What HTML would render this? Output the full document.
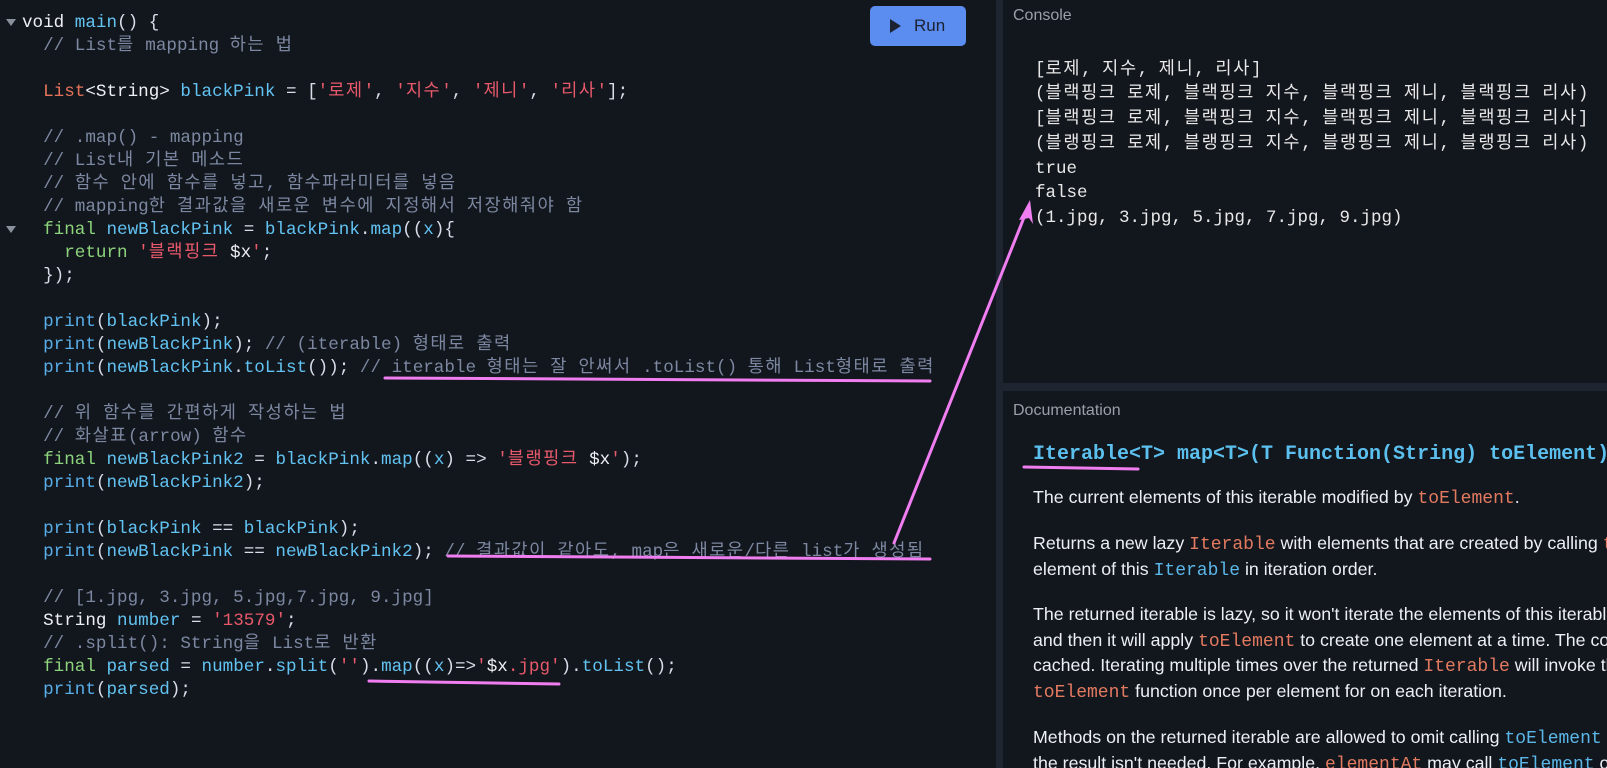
<!DOCTYPE html>
<html><head><meta charset="utf-8">
<style>
html,body{margin:0;padding:0;background:#12161d;width:1607px;height:768px;overflow:hidden}
body{position:relative;font-family:"Liberation Sans","Noto Sans CJK KR",sans-serif}
#ed{position:absolute;left:0;top:0;width:996px;height:768px;background:#12161d;overflow:hidden}
pre{margin:0;position:absolute;left:22px;top:11.5px;font-size:17.6px;line-height:23px;color:#d8dee9;font-family:"Liberation Mono","WenQuanYi Zen Hei",monospace;white-space:pre}
i{font-style:normal;letter-spacing:1.5px}
#con i{letter-spacing:1.7px}
.c{color:#7c88a1}.s{color:#e8596b}.g{color:#8dd47c}.b{color:#62c3f2}.o{color:#e5735a}.w{color:#eef0f4}.p{color:#58aee8}
.fold{position:absolute;left:6px;width:0;height:0;border-left:5px solid transparent;border-right:5px solid transparent;border-top:7px solid #8a919c}
#div{position:absolute;left:996px;top:0;width:7px;height:768px;background:#1f2530}
#rp{position:absolute;left:1003px;top:0;width:604px;height:768px;overflow:hidden}
#hband{position:absolute;left:0;top:383px;width:604px;height:8px;background:#1f2530}
.lbl{position:absolute;left:10px;font-size:16px;color:#9aa0a8}
#con{position:absolute;left:32px;top:57.5px;font-size:17.5px;line-height:24.8px;color:#e8e8e8;white-space:pre;font-family:"Liberation Mono","WenQuanYi Zen Hei",monospace}
#run{position:absolute;left:870px;top:6px;width:96px;height:40px;border-radius:5px;background:#5b8cf0}
#run .t{position:absolute;left:20px;top:13px;width:0;height:0;border-top:7px solid transparent;border-bottom:7px solid transparent;border-left:11px solid #1c2230}
#run .r{position:absolute;left:44px;top:10px;font-size:17px;color:#1c2230}
#sig{position:absolute;left:30px;top:443px;font-size:20px;font-weight:bold;color:#5cc0ee;white-space:pre;font-family:"Liberation Mono",monospace}
.doc{position:absolute;left:30px;font-size:17.8px;line-height:25.5px;color:#eceff3;white-space:nowrap}
.doc code{font-family:"Liberation Mono",monospace;font-size:18px}
.r1{color:#e27a60}.b1{color:#5ab7e8}
svg{position:absolute;left:0;top:0}
</style></head><body>
<div id="ed">
<div class="fold" style="top:19px"></div>
<div class="fold" style="top:226px"></div>
<pre><span class="w">void</span> <span class="b">main</span>() {
  <span class="c">// List<i>를</i> mapping <i>하는</i> <i>법</i></span>

  <span class="o">List</span><span class="w">&lt;String&gt;</span> <span class="b">blackPink</span> = [<span class="s">'<i>로제</i>'</span>, <span class="s">'<i>지수</i>'</span>, <span class="s">'<i>제니</i>'</span>, <span class="s">'<i>리사</i>'</span>];

  <span class="c">// .map() - mapping</span>
  <span class="c">// List<i>내</i> <i>기본</i> <i>메소드</i></span>
  <span class="c">// <i>함수</i> <i>안에</i> <i>함수를</i> <i>넣고</i>, <i>함수파라미터를</i> <i>넣음</i></span>
  <span class="c">// mapping<i>한</i> <i>결과값을</i> <i>새로운</i> <i>변수에</i> <i>지정해서</i> <i>저장해줘야</i> <i>함</i></span>
  <span class="g">final</span> <span class="b">newBlackPink</span> = <span class="b">blackPink</span>.<span class="b">map</span>((<span class="b">x</span>){
    <span class="g">return</span> <span class="s">'<i>블랙핑크</i> </span><span class="w">$x</span><span class="s">'</span>;
  });

  <span class="p">print</span>(<span class="b">blackPink</span>);
  <span class="p">print</span>(<span class="b">newBlackPink</span>); <span class="c">// (iterable) <i>형태로</i> <i>출력</i></span>
  <span class="p">print</span>(<span class="b">newBlackPink</span>.<span class="b">toList</span>()); <span class="c">// iterable <i>형태는</i> <i>잘</i> <i>안써서</i> .toList() <i>통해</i> List<i>형태로</i> <i>출력</i></span>

  <span class="c">// <i>위</i> <i>함수를</i> <i>간편하게</i> <i>작성하는</i> <i>법</i></span>
  <span class="c">// <i>화살표</i>(arrow) <i>함수</i></span>
  <span class="g">final</span> <span class="b">newBlackPink2</span> = <span class="b">blackPink</span>.<span class="b">map</span>((<span class="b">x</span>) =&gt; <span class="s">'<i>블랭핑크</i> </span><span class="w">$x</span><span class="s">'</span>);
  <span class="p">print</span>(<span class="b">newBlackPink2</span>);

  <span class="p">print</span>(<span class="b">blackPink</span> == <span class="b">blackPink</span>);
  <span class="p">print</span>(<span class="b">newBlackPink</span> == <span class="b">newBlackPink2</span>); <span class="c">// <i>결과값이</i> <i>같아도</i>, map<i>은</i> <i>새로운</i>/<i>다른</i> list<i>가</i> <i>생성됨</i></span>

  <span class="c">// [1.jpg, 3.jpg, 5.jpg,7.jpg, 9.jpg]</span>
  <span class="w">String</span> <span class="b">number</span> = <span class="s">'13579'</span>;
  <span class="c">// .split(): String<i>을</i> List<i>로</i> <i>반환</i></span>
  <span class="g">final</span> <span class="b">parsed</span> = <span class="b">number</span>.<span class="b">split</span>(<span class="s">''</span>).<span class="b">map</span>((<span class="b">x</span>)=&gt;<span class="s">'</span><span class="w">$x</span><span class="s">.jpg'</span>).<span class="b">toList</span>();
  <span class="p">print</span>(<span class="b">parsed</span>);



}</pre>
<div id="run"><div class="t"></div><div class="r">Run</div></div>
</div>
<div id="div"></div>
<div id="rp">
<div id="hband"></div>
<div class="lbl" style="top:7px">Console</div>
<div id="con">[<i>로제</i>, <i>지수</i>, <i>제니</i>, <i>리사</i>]
(<i>블랙핑크</i> <i>로제</i>, <i>블랙핑크</i> <i>지수</i>, <i>블랙핑크</i> <i>제니</i>, <i>블랙핑크</i> <i>리사</i>)
[<i>블랙핑크</i> <i>로제</i>, <i>블랙핑크</i> <i>지수</i>, <i>블랙핑크</i> <i>제니</i>, <i>블랙핑크</i> <i>리사</i>]
(<i>블랭핑크</i> <i>로제</i>, <i>블랭핑크</i> <i>지수</i>, <i>블랭핑크</i> <i>제니</i>, <i>블랭핑크</i> <i>리사</i>)
true
false
(1.jpg, 3.jpg, 5.jpg, 7.jpg, 9.jpg)</div>
<div class="lbl" style="top:402px">Documentation</div>
<div id="sig">Iterable&lt;T&gt; map&lt;T&gt;(T Function(String) toElement)</div>
<div class="doc" style="top:485px">The current elements of this iterable modified by <code class="r1">toElement</code>.</div>
<div class="doc" style="top:531px">Returns a new lazy <code class="r1">Iterable</code> with elements that are created by calling <code class="r1">toElement</code> on each</div>
<div class="doc" style="top:557px">element of this <code class="b1">Iterable</code> in iteration order.</div>
<div class="doc" style="top:602px">The returned iterable is lazy, so it won't iterate the elements of this iterable until it is itself iterated,</div>
<div class="doc" style="top:628px">and then it will apply <code class="r1">toElement</code> to create one element at a time. The converted elements are not</div>
<div class="doc" style="top:653px">cached. Iterating multiple times over the returned <code class="r1">Iterable</code> will invoke the supplied</div>
<div class="doc" style="top:679px"><code class="r1">toElement</code> function once per element for on each iteration.</div>
<div class="doc" style="top:725px">Methods on the returned iterable are allowed to omit calling <code class="b1">toElement</code> on any element where</div>
<div class="doc" style="top:751px">the result isn't needed. For example, <code class="r1">elementAt</code> may call <code class="b1">toElement</code> only once.</div>
</div>
<svg width="1607" height="768" viewBox="0 0 1607 768">
<g stroke="#f07ef0" stroke-width="3" fill="none" stroke-linecap="round">
<path d="M385 378 L930 381"/>
<path d="M448 556 L930 559"/>
<path d="M369 681 L559 684"/>
<path d="M1024 467 L1138 469"/>
<path d="M894 543 L1029 205"/>
</g>
<path d="M1030 200 L1019 220 L1029 218 L1033 224 Z" fill="#f07ef0"/>
</svg>
</body></html>
